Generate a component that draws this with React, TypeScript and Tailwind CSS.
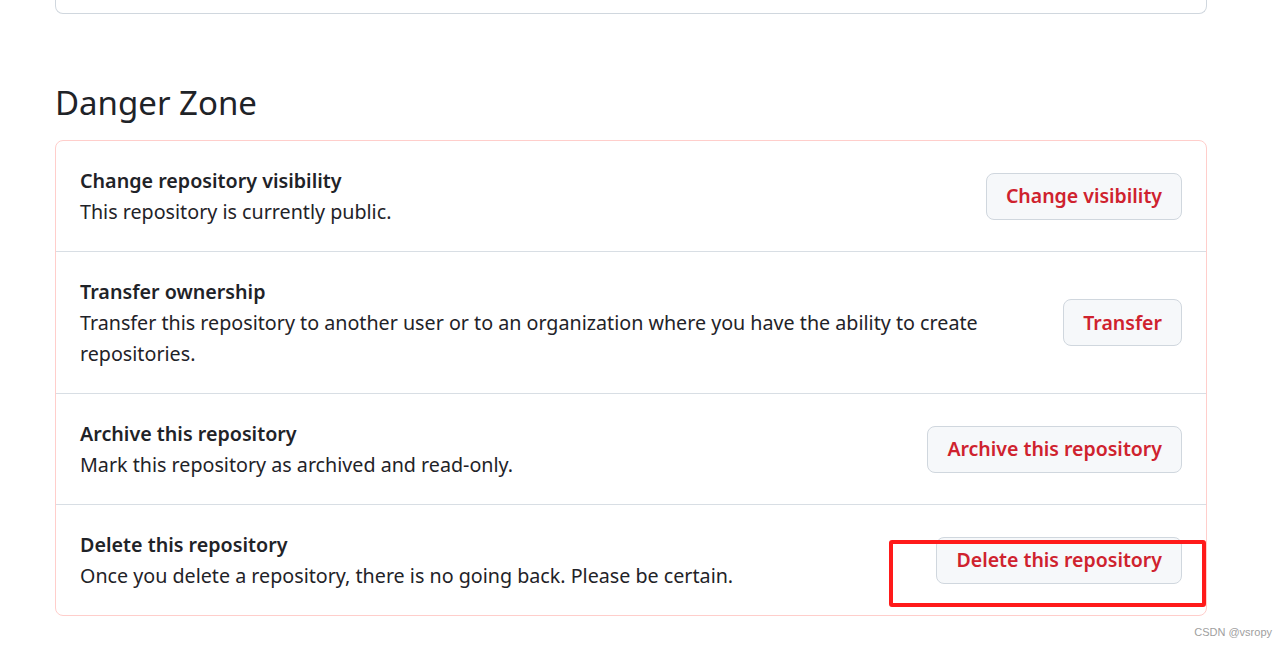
import React from 'react';

interface DangerRowProps {
    title: string;
    description: string;
    action: string;
    highlighted?: boolean;
    isLast?: boolean;
}

const DangerRow: React.FC<DangerRowProps> = ({ title, description, action, highlighted, isLast }) => {
    return (
        <div className={`relative flex items-center justify-between gap-6 px-6 py-6 ${isLast ? '' : 'border-b border-[#d8dee4]'}`}>
            <div className="flex-1 min-w-0">
                <div className="text-[19.7px] leading-[31px] font-semibold text-[#1f2328]">{title}</div>
                <div className="text-[19.7px] leading-[31px] text-[#1f2328]">{description}</div>
            </div>
            <button className="flex-shrink-0 h-[47px] px-[19px] rounded-lg border border-[#d0d7de] bg-[#f6f8fa] text-[19.5px] font-semibold text-[#cf222e] whitespace-nowrap">
                {action}
            </button>

            {/* red annotation box drawn over the screenshot */}
            {highlighted && (
                <div className="absolute left-[833px] top-[35px] w-[317px] h-[67px] border-4 border-[#ff1a1a] rounded-[3px] pointer-events-none" />
            )}
        </div>
    );
};

const rows = [
    {
        title: 'Change repository visibility',
        description: 'This repository is currently public.',
        action: 'Change visibility',
    },
    {
        title: 'Transfer ownership',
        description: 'Transfer this repository to another user or to an organization where you have the ability to create repositories.',
        action: 'Transfer',
    },
    {
        title: 'Archive this repository',
        description: 'Mark this repository as archived and read-only.',
        action: 'Archive this repository',
    },
    {
        title: 'Delete this repository',
        description: 'Once you delete a repository, there is no going back. Please be certain.',
        action: 'Delete this repository',
        highlighted: true,
    },
];

export default function App() {
    return (
        <div className="relative w-[1288px] h-[650px] overflow-hidden bg-white font-['Noto_Sans',sans-serif]">
            <div className="ml-[55px] w-[1152px]">
                {/* bottom edge of the previous settings box */}
                <div className="h-[14px] border border-t-0 border-[#d0d7de] rounded-b-lg" />

                <h2 className="mt-[66px] mb-[15px] text-[33px] leading-[45px] font-normal text-[#1f2328]">Danger Zone</h2>

                <div className="rounded-lg border border-[#ffcecb]">
                    {rows.map((row, idx) => (
                        <DangerRow key={row.title} {...row} isLast={idx === rows.length - 1} />
                    ))}
                </div>
            </div>

            <div className="absolute right-[16px] bottom-[10px] text-[11px] text-[#a0a0a0] font-['Liberation_Sans',sans-serif]">
                CSDN @vsropy
            </div>
        </div>
    );
}
